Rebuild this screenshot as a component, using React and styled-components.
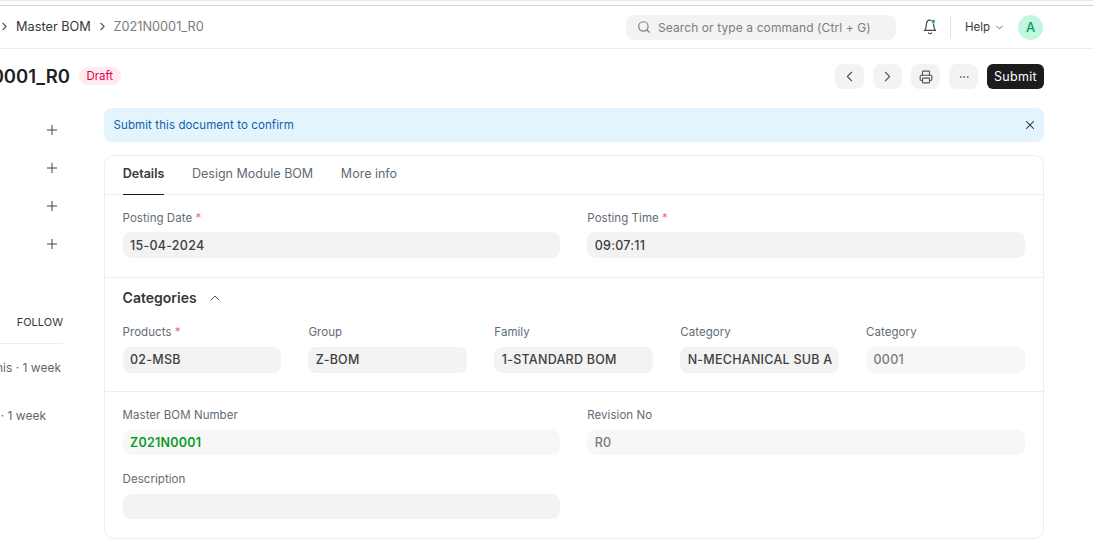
import { createGlobalStyle } from 'styled-components';
import styled from 'styled-components';
import { LuSearch, LuChevronRight, LuChevronLeft, LuChevronDown, LuChevronUp, LuPlus, LuX, LuPrinter, LuEllipsis } from 'react-icons/lu';

const GlobalStyle = createGlobalStyle`
  html, body {
    margin: 0;
    padding: 0;
    background: #fff;
    overflow: hidden;
  }
  body {
    font-family: Inter, "Liberation Sans", sans-serif;
    color: #383838;
    font-size: 13px;
  }
  * {
    box-sizing: border-box;
  }
`;

const Viewport = styled.div`
  width: 1093px;
  height: 546px;
  overflow: hidden;
`;

const TopStrip = styled.div`
  height: 6px;
  border-top: 1px solid #e8e8e8;
  border-bottom: 1px solid #cfcfcf;
`;

// page is scrolled sideways in the shot, so everything sits 100px to the left
const Shell = styled.div`
  width: 1193px;
  margin-left: -100px;
`;

const Navbar = styled.header`
  height: 43px;
  border-bottom: 1px solid #ededed;
  display: flex;
  align-items: center;
  padding-right: 50px;
`;

const Crumbs = styled.nav`
  display: flex;
  align-items: center;
  margin-left: 98px;
  font-size: 12.75px;
  color: #383838;
  flex: 1;
  margin-top: -1px;

  svg {
    color: #555;
    font-size: 13px;
  }
`;

const CrumbLink = styled.span`
  margin: 0 5px 0 5px;
`;

const CrumbCurrent = styled.span`
  color: #7c7c7c;
  margin-left: 4.5px;
`;

const SearchBox = styled.div`
  width: 270px;
  height: 25px;
  border-radius: 8px;
  background: #f3f3f3;
  display: flex;
  align-items: center;
  gap: 7px;
  padding-left: 11px;
  color: #7c7c7c;
  font-size: 12px;
  letter-spacing: 0.1px;
  margin-right: -1px;

  svg {
    font-size: 14px;
    color: #7c7c7c;
  }
`;

const Bell = styled.svg`
  width: 16px;
  height: 18px;
  margin-left: 27px;
  display: block;
`;

const NavDivider = styled.div`
  width: 1px;
  height: 22px;
  background: #e2e2e2;
  margin: 0 14px 0 12px;
`;

const HelpLink = styled.div`
  display: flex;
  align-items: center;
  gap: 4px;
  font-size: 11.5px;
  color: #383838;

  svg {
    font-size: 11px;
    color: #666;
  }
`;

const Avatar = styled.div`
  width: 25px;
  height: 25px;
  border-radius: 50%;
  background: #c0f7de;
  color: #0f9a62;
  display: flex;
  align-items: center;
  justify-content: center;
  font-size: 13px;
  font-weight: 500;
  margin-left: 13px;
`;

const TitleRow = styled.div`
  height: 55px;
  display: flex;
  align-items: center;
  padding: 0 49px 0 0;
`;

const TitleText = styled.h1`
  margin: 0 0 2px 34px;
  font-size: 18.5px;
  font-weight: 600;
  color: #1f1f1f;
`;

const Pill = styled.span`
  margin: 0 0 2px 9px;
  height: 18px;
  padding: 0 7.5px;
  border-radius: 9px;
  background: #ffeaf0;
  color: #e5004d;
  font-size: 11.5px;
  display: flex;
  align-items: center;
`;

const Actions = styled.div`
  margin-left: auto;
  display: flex;
  align-items: center;
  gap: 9px;
`;

const IconButton = styled.button`
  width: 29px;
  height: 25px;
  border: 0;
  border-radius: 8px;
  background: #f3f3f3;
  color: #555;
  display: flex;
  align-items: center;
  justify-content: center;
  padding: 0;
  font-size: 17px;

  svg {
    stroke-width: ${p => p.$stroke || 1.5};
  }
`;

const PrimaryButton = styled.button`
  height: 25px;
  width: 57px;
  border: 0;
  border-radius: 6px;
  background: #1c1c1c;
  color: #fff;
  font-family: inherit;
  font-size: 12.5px;
  letter-spacing: 0.3px;
  padding: 0;
`;

const Columns = styled.div`
  display: flex;
  padding-right: 49px;
`;

const Sidebar = styled.aside`
  width: 163px;
  margin-right: 41px;
  flex-shrink: 0;
  color: #555;
`;

const AddRows = styled.div`
  display: flex;
  flex-direction: column;
  align-items: flex-end;
  padding: 18px 3px 0 0;
  gap: 22px;

  svg {
    font-size: 16px;
    color: #444;
    display: block;
    stroke-width: 1.5;
  }
`;

const FollowRow = styled.div`
  margin-top: 62px;
  height: 30px;
  padding-top: 1px;
  border-bottom: 1px solid #ededed;
  text-align: right;
  font-size: 11px;
  color: #383838;
  line-height: 14px;
`;

const Activity = styled.div`
  font-size: 12px;
  line-height: 15px;
  white-space: nowrap;
  text-align: right;
  color: #666;
  padding-right: ${p => p.$inset}px;
  margin-top: ${p => p.$gap}px;
`;

const Main = styled.main`
  flex: 1;
  min-width: 0;
  margin-top: 4px;
`;

const Alert = styled.div`
  height: 34px;
  border-radius: 8px;
  background: #e3f4fc;
  color: #0a5fb0;
  font-size: 11.5px;
  letter-spacing: 0.1px;
  display: flex;
  align-items: center;
  justify-content: space-between;
  padding: 0 7px 1px 9.5px;

  svg {
    color: #222;
    font-size: 14px;
    stroke-width: 1.8;
  }
`;

const Card = styled.section`
  margin-top: 13px;
  height: 384px;
  border: 1px solid #ededed;
  border-radius: 10px;
`;

const Tabs = styled.div`
  height: 39px;
  border-bottom: 1px solid #ededed;
  display: flex;
  gap: 27.7px;
  padding-left: 17.8px;
`;

const Tab = styled.div`
  height: 39px;
  padding-bottom: 3px;
  display: flex;
  align-items: center;
  font-size: 12.5px;
  color: ${p => (p.$active ? '#383838' : '#5f6b76')};
  font-weight: ${p => (p.$active ? 600 : 400)};
  border-bottom: 1px solid ${p => (p.$active ? '#1c1c1c' : 'transparent')};
`;

const Section = styled.div`
  padding: ${p => p.$top}px 18px 0 17.6px;
  height: ${p => p.$height}px;
  border-bottom: ${p => (p.$last ? 0 : '1px solid #ededed')};
`;

const FieldGrid = styled.div`
  display: grid;
  grid-template-columns: repeat(${p => p.$cols}, 1fr);
  column-gap: 27px;
`;

const Field = styled.div`
  min-width: 0;
  margin-bottom: ${p => p.$after || 0}px;
`;

const Label = styled.div`
  font-size: 11.5px;
  line-height: 16px;
  letter-spacing: 0.05px;
  color: #5f6b76;
  margin-bottom: ${p => p.$gap || 6}px;
`;

const Star = styled.span`
  color: #f56b8c;
`;

const Input = styled.div`
  height: ${p => p.$h || 26}px;
  border-radius: 8px;
  background: ${p => (p.$readonly ? '#f7f7f7' : '#f3f3f3')};
  padding: 0 7.4px ${p => (p.$lift ? 2 : 0)}px;
  display: flex;
  align-items: center;
  font-size: 12.5px;
  letter-spacing: 0.25px;
  white-space: nowrap;
  overflow: hidden;
  font-weight: ${p => (p.$bold ? 600 : 500)};
  color: ${p => p.$color || '#404040'};
`;

const SectionHead = styled.div`
  display: flex;
  align-items: center;
  gap: 10px;
  font-size: 14px;
  font-weight: 600;
  color: #383838;
  margin-bottom: 17px;
  height: 20px;

  svg {
    font-size: 16px;
    color: #555;
    stroke-width: 1.5;
    margin-top: 2px;
  }
`;

const BellIcon = () => (
  <Bell viewBox="0 0 16 18" fill="none" stroke="#444" strokeWidth="1.2" strokeLinecap="round" strokeLinejoin="round">
    <path d="M8 2.2c-2.4 0-3.6 2-3.6 4.4 0 3.4-1 5-1.9 5.8h11c-.9-.8-1.9-2.4-1.9-5.8 0-2.4-1.2-4.4-3.6-4.4z" />
    <path d="M6.4 15c.4.7 2.8.7 3.2 0" />
    <circle cx="11.4" cy="3.4" r="2" fill="#0fa968" stroke="#fff" strokeWidth="0.6" />
  </Bell>
);

export default function App() {
  return (
    <Viewport>
      <GlobalStyle />
      <TopStrip />
      <Shell>
        <Navbar>
          <Crumbs>
            <LuChevronRight />
            <CrumbLink>Master BOM</CrumbLink>
            <LuChevronRight />
            <CrumbCurrent>Z021N0001_R0</CrumbCurrent>
          </Crumbs>
          <SearchBox>
            <LuSearch />
            Search or type a command (Ctrl + G)
          </SearchBox>
          <BellIcon />
          <NavDivider />
          <HelpLink>
            Help <LuChevronDown />
          </HelpLink>
          <Avatar>A</Avatar>
        </Navbar>

        <TitleRow>
          <TitleText>Z021N0001_R0</TitleText>
          <Pill>Draft</Pill>
          <Actions>
            <IconButton><LuChevronLeft /></IconButton>
            <IconButton><LuChevronRight /></IconButton>
            <IconButton $stroke={2}><LuPrinter size={14} /></IconButton>
            <IconButton><LuEllipsis size={12} /></IconButton>
            <PrimaryButton>Submit</PrimaryButton>
          </Actions>
        </TitleRow>

        <Columns>
          <Sidebar>
            <AddRows>
              <LuPlus />
              <LuPlus />
              <LuPlus />
              <LuPlus />
            </AddRows>
            <FollowRow>FOLLOW</FollowRow>
            <Activity $inset={2} $gap={16}>You edited this · 1 week</Activity>
            <Activity $inset={17} $gap={33}>You created this · 1 week</Activity>
          </Sidebar>

          <Main>
            <Alert>
              Submit this document to confirm
              <LuX />
            </Alert>
            <Card>
              <Tabs>
                <Tab $active>Details</Tab>
                <Tab>Design Module BOM</Tab>
                <Tab>More info</Tab>
              </Tabs>

              <Section $top={15} $height={83}>
                <FieldGrid $cols={2}>
                  <Field>
                    <Label>Posting Date <Star>*</Star></Label>
                    <Input>15-04-2024</Input>
                  </Field>
                  <Field>
                    <Label>Posting Time <Star>*</Star></Label>
                    <Input>09:07:11</Input>
                  </Field>
                </FieldGrid>
              </Section>

              <Section $top={9} $height={114}>
                <SectionHead>
                  Categories <LuChevronUp />
                </SectionHead>
                <FieldGrid $cols={5}>
                  <Field>
                    <Label $gap={7}>Products <Star>*</Star></Label>
                    <Input $lift>02-MSB</Input>
                  </Field>
                  <Field>
                    <Label $gap={7}>Group</Label>
                    <Input $lift>Z-BOM</Input>
                  </Field>
                  <Field>
                    <Label $gap={7}>Family</Label>
                    <Input $lift>1-STANDARD BOM</Input>
                  </Field>
                  <Field>
                    <Label $gap={7}>Category</Label>
                    <Input $lift>N-MECHANICAL SUB A</Input>
                  </Field>
                  <Field>
                    <Label $gap={7}>Category</Label>
                    <Input $lift $readonly $color="#7c7c7c">0001</Input>
                  </Field>
                </FieldGrid>
              </Section>

              <Section $top={15} $height={146} $last>
                <FieldGrid $cols={2}>
                  <Field $after={16}>
                    <Label $gap={7}>Master BOM Number</Label>
                    <Input $h={25} $readonly $bold $color="#0a9a2c">Z021N0001</Input>
                  </Field>
                  <Field $after={16}>
                    <Label $gap={7}>Revision No</Label>
                    <Input $h={25} $readonly $color="#7c7c7c">R0</Input>
                  </Field>
                  <Field>
                    <Label $gap={7}>Description</Label>
                    <Input $h={25} />
                  </Field>
                </FieldGrid>
              </Section>
            </Card>
          </Main>
        </Columns>
      </Shell>
    </Viewport>
  );
}
